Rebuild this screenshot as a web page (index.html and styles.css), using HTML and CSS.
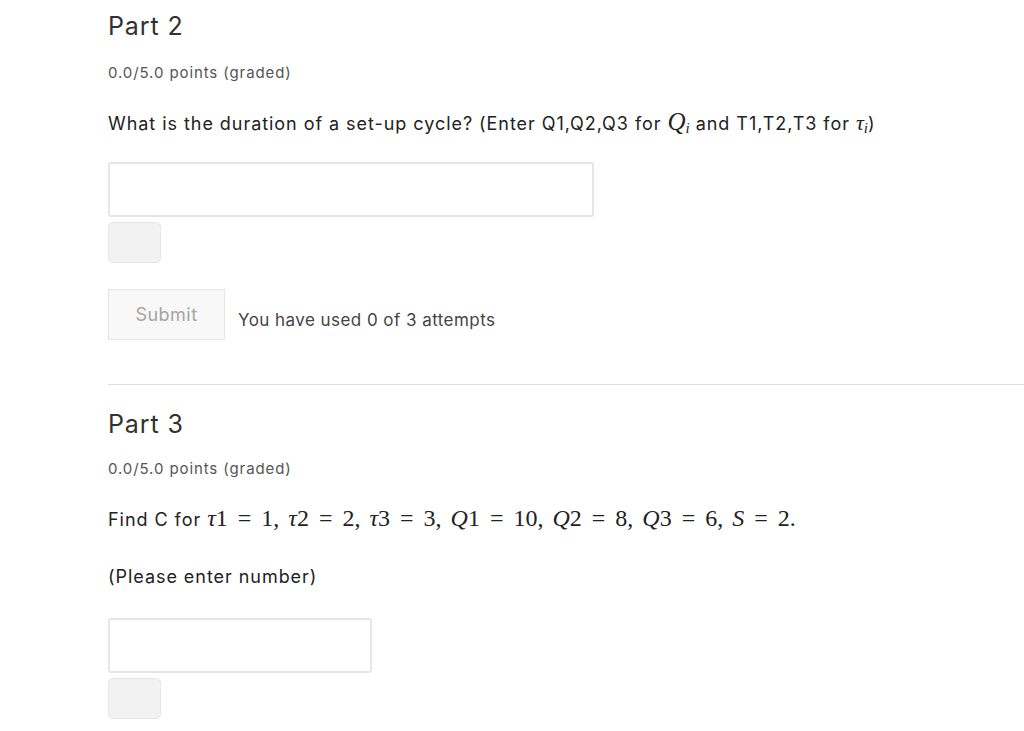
FILE: index.html
```html
<!DOCTYPE html>
<html>
<head>
<meta charset="utf-8">
<link rel="stylesheet" href="styles.css">
</head>
<body>
<div class="page">
  <section class="part">
    <h2 class="title">Part 2</h2>
    <div class="points">0.0/5.0 points (graded)</div>
    <p class="question">What is the duration of a set-up cycle? (Enter Q1,Q2,Q3 for <span class="math"><i class="q">Q</i><sub><i>i</i></sub></span> and T1,T2,T3 for <span class="math"><i>τ</i><sub><i>i</i></sub></span>)</p>
    <div class="input wide first"></div>
    <div class="status"></div>
    <div class="actions">
      <div class="submit">Submit</div>
      <span class="attempts">You have used 0 of 3 attempts</span>
    </div>
  </section>
  <hr class="divider">
  <section class="part">
    <h2 class="title second">Part 3</h2>
    <div class="points second">0.0/5.0 points (graded)</div>
    <p class="question find">Find C for <span class="math big"><i>τ</i>1<span class="rel">=</span>1,<span class="sep"></span><i>τ</i>2<span class="rel">=</span>2,<span class="sep"></span><i>τ</i>3<span class="rel">=</span>3,<span class="sep"></span><i>Q</i>1<span class="rel">=</span>10,<span class="sep"></span><i>Q</i>2<span class="rel">=</span>8,<span class="sep"></span><i>Q</i>3<span class="rel">=</span>6,<span class="sep"></span><i>S</i><span class="rel">=</span>2.</span></p>
    <p class="note">(Please enter number)</p>
    <div class="input narrow"></div>
    <div class="status"></div>
  </section>
</div>
</body>
</html>
```

FILE: styles.css
```css
html, body {
  margin: 0;
  padding: 0;
  background: #ffffff;
}
body {
  font-family: Inter, "Noto Sans", sans-serif;
  color: #222;
}
.page {
  padding: 0 0 0 108px;
}
.part {
  display: flex;
  flex-direction: column;
  align-items: flex-start;
}
.title {
  margin: 10px 0 0 0;
  font-size: 25px;
  font-weight: 400;
  letter-spacing: 0.9px;
  color: #313131;
  line-height: 32px;
}
.title.second {
  margin-top: 23px;
}
.points {
  margin-top: 21px;
  font-size: 15px;
  line-height: 20px;
  letter-spacing: 0.9px;
  color: #555;
}
.points.second {
  margin-top: 19px;
}
.question {
  margin: 27px 0 0 0;
  font-size: 18px;
  line-height: 24px;
  letter-spacing: 0.95px;
  color: #222;
}
.question.find {
  margin-top: 27px;
}
.math {
  font-family: "Liberation Serif", "DejaVu Serif", serif;
  font-size: 22px;
  letter-spacing: 0;
  line-height: 24px;
}
.math .q {
  font-size: 25px;
}
.math sub {
  font-size: 15px;
  vertical-align: -3px;
  line-height: 0;
}
.math.big {
  font-size: 24px;
}
.rel {
  margin: 0 10px;
}
.sep {
  display: inline-block;
  width: 9px;
}
.input {
  margin-top: 29px;
  height: 51px;
  border: 2px solid #e6e6e6;
  border-radius: 3px;
  box-sizing: content-box;
  background: #fff;
}
.input.first {
  margin-top: 26px;
}
.wide { width: 482px; }
.narrow { width: 260px; }
.status {
  margin-top: 5px;
  width: 51px;
  height: 39px;
  background: #f2f2f2;
  border: 1px solid #e6e6e6;
  border-radius: 5px;
}
.actions {
  margin-top: 26px;
  display: flex;
  align-items: flex-end;
  gap: 13px;
}
.submit {
  width: 117px;
  height: 51px;
  box-sizing: border-box;
  border: 1px solid #e6e6e6;
  background: #f8f8f8;
  color: #a5a5a5;
  font-size: 18px;
  letter-spacing: 0.5px;
  display: flex;
  align-items: center;
  justify-content: center;
  padding-bottom: 0;
}
.attempts {
  font-size: 17px;
  color: #444;
  line-height: 20px;
  letter-spacing: 0.45px;
  padding-bottom: 10px;
}
.divider {
  margin: 44px 0 0 0;
  border: 0;
  border-top: 1px solid #dddddd;
  height: 0;
}
.note {
  margin: 33px 0 0 0;
  font-size: 18px;
  line-height: 24px;
  letter-spacing: 0.95px;
  color: #222;
}
```
